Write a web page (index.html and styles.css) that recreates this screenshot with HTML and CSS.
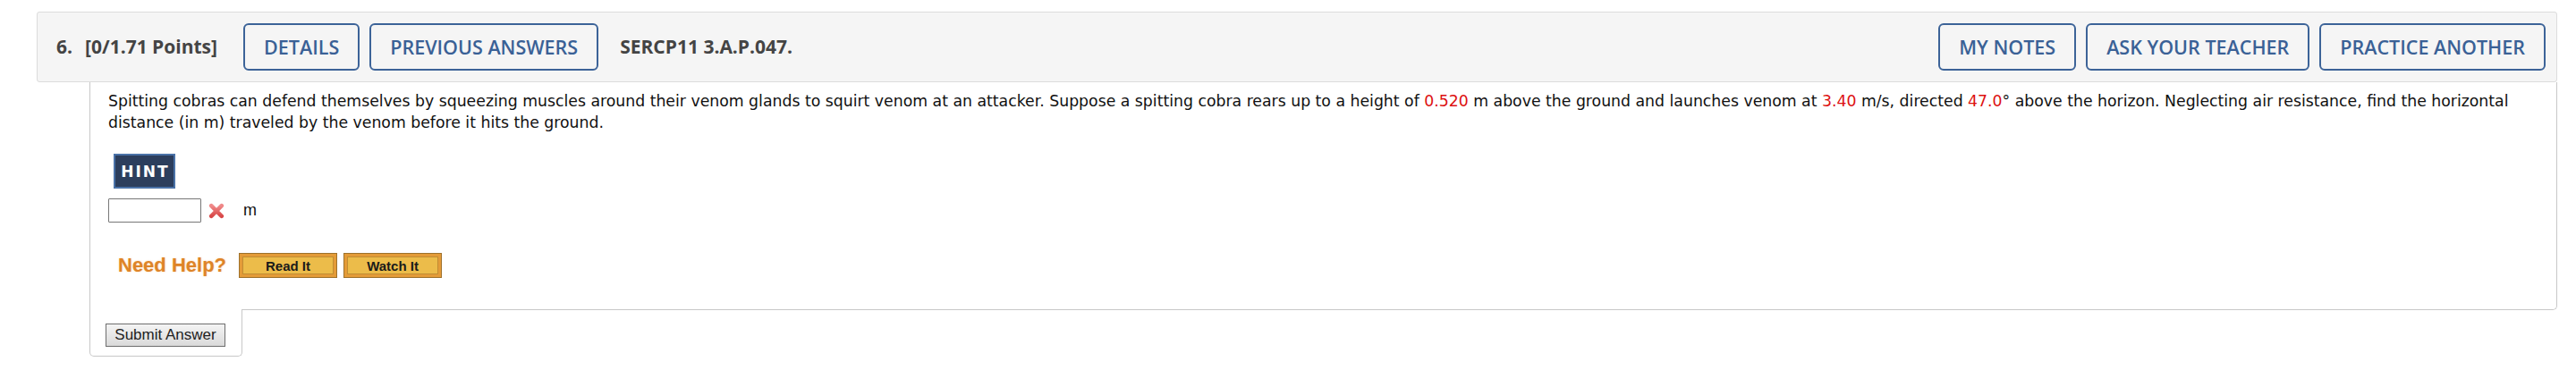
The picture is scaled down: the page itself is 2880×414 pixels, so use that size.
FILE: index.html
```html
<!DOCTYPE html>
<html>
<head>
<meta charset="utf-8">
<link rel="stylesheet" href="styles.css">
</head>
<body>
<div class="question">
  <div class="qhead">
    <div class="qhead-left">
      <span class="qnum">6.</span>
      <span class="qpoints">[0/1.71 Points]</span>
      <button class="hbtn hbtn-first">DETAILS</button>
      <button class="hbtn">PREVIOUS ANSWERS</button>
      <span class="qcode">SERCP11 3.A.P.047.</span>
    </div>
    <div class="qhead-right">
      <button class="hbtn">MY NOTES</button>
      <button class="hbtn">ASK YOUR TEACHER</button>
      <button class="hbtn">PRACTICE ANOTHER</button>
    </div>
  </div>
  <div class="qbody">
    <p class="qtext">Spitting cobras can defend themselves by squeezing muscles around their venom glands to squirt venom at an attacker. Suppose a spitting cobra rears up to a height of <span class="val">0.520</span> m above the ground and launches venom at <span class="val">3.40</span> m/s, directed <span class="val">47.0</span>° above the horizon. Neglecting air resistance, find the horizontal distance (in m) traveled by the venom before it hits the ground.</p>
    <button class="hint">HINT</button>
    <div class="answer-row">
      <input class="answer" type="text">
      <svg class="xmark" width="18" height="18" viewBox="0 0 18 18">
        <defs>
          <linearGradient id="xg" x1="0" y1="0" x2="0" y2="1">
            <stop offset="0" stop-color="#f08a8a"/>
            <stop offset="1" stop-color="#d84848"/>
          </linearGradient>
        </defs>
        <path d="M3.2 3.2 L14.8 14.8 M14.8 3.2 L3.2 14.8" stroke="url(#xg)" stroke-width="4.6" stroke-linecap="round"/>
      </svg>
      <span class="unit">m</span>
    </div>
    <div class="help-row">
      <span class="need-help">Need Help?</span>
      <button class="help-btn">Read It</button>
      <button class="help-btn">Watch It</button>
    </div>
  </div>
  <div class="submit-box">
    <button class="submit">Submit Answer</button>
  </div>
</div>
</body>
</html>
```
FILE: styles.css
```css
html, body {
  margin: 0;
  padding: 0;
  background: #ffffff;
}

.question {
  margin: 13px 21px 0 41px;
}

.qhead {
  box-sizing: border-box;
  height: 79px;
  display: flex;
  align-items: center;
  justify-content: space-between;
  padding: 0 12px 0 21px;
  background: #f5f5f5;
  border: 1px solid #dcdcdc;
  border-radius: 3px;
  font-family: "Open Sans", sans-serif;
  line-height: 1.2;
}

.qhead-left,
.qhead-right {
  display: flex;
  align-items: center;
  gap: 11px;
}

.qnum,
.qpoints,
.qcode {
  font-size: 21px;
  font-weight: 700;
  color: #444444;
}

.qnum {
  margin-right: 3px;
}

.qpoints {
  margin-right: 18px;
}

.qcode {
  margin-left: 13px;
}

.hbtn {
  box-sizing: border-box;
  height: 53px;
  padding: 0 21px;
  background: transparent;
  border: 2px solid #3c6398;
  border-radius: 6px;
  font-family: "Open Sans", sans-serif;
  font-size: 21.5px;
  line-height: 1.2;
  font-weight: 600;
  color: #3a6196;
}

.qbody {
  margin-left: 59px;
  padding: 9px 20px 35px 20px;
  border: 1px solid #c8c8c8;
  border-top: none;
  border-radius: 0 0 5px 0;
  background: #ffffff;
}

.qtext {
  margin: 0;
  font-family: "DejaVu Sans", Verdana, sans-serif;
  font-size: 17.3px;
  line-height: 24px;
  color: #111111;
}

.val {
  color: #dd1111;
}

.hint {
  display: block;
  box-sizing: border-box;
  width: 69px;
  height: 39px;
  margin: 23px 0 0 6px;
  padding: 0 0 0 2px;
  background: #2c3e5d;
  border: 2px solid #4a72a8;
  border-radius: 0;
  font-family: "DejaVu Sans", Verdana, sans-serif;
  font-size: 17px;
  font-weight: 700;
  letter-spacing: 2px;
  color: #ffffff;
}

.answer-row {
  display: flex;
  align-items: center;
  margin-top: 11px;
  height: 27px;
}

.answer {
  box-sizing: border-box;
  width: 104px;
  height: 27px;
  margin: 0;
  border: 1px solid #777777;
  border-radius: 1px;
  background: #ffffff;
}

.xmark {
  margin-left: 8px;
}

.unit {
  margin-left: 21px;
  font-family: "Liberation Sans", Arial, sans-serif;
  font-size: 18px;
  color: #111111;
}

.help-row {
  display: flex;
  align-items: center;
  gap: 7px;
  margin-top: 34px;
  padding-left: 11px;
}

.need-help {
  margin-right: 7px;
  font-family: "Liberation Sans", Arial, sans-serif;
  font-size: 22px;
  font-weight: 700;
  color: #de8428;
  text-shadow: 0 0 2px rgba(240, 170, 90, 0.6);
}

.help-btn {
  box-sizing: border-box;
  width: 110px;
  height: 28px;
  padding: 0;
  border: 1px solid #9e712c;
  border-radius: 0;
  background: #ecbc4a;
  box-shadow: inset 0 0 0 3px #e49b38, inset 0 0 0 4px #c18d33;
  font-family: "Liberation Sans", Arial, sans-serif;
  font-size: 15px;
  font-weight: 700;
  color: #1a1a1a;
}

.submit-box {
  position: relative;
  box-sizing: border-box;
  width: 171px;
  margin: -1px 0 0 59px;
  padding: 16px 0 10px 17px;
  background: #ffffff;
  border: 1px solid #c8c8c8;
  border-top: none;
  border-radius: 0 0 5px 5px;
}

.submit {
  box-sizing: border-box;
  width: 134px;
  height: 26px;
  padding: 0;
  border: 1px solid #6e6e6e;
  border-radius: 0;
  background: linear-gradient(#f4f4f4, #dadada);
  font-family: "Liberation Sans", Arial, sans-serif;
  font-size: 17px;
  color: #222222;
}
```
